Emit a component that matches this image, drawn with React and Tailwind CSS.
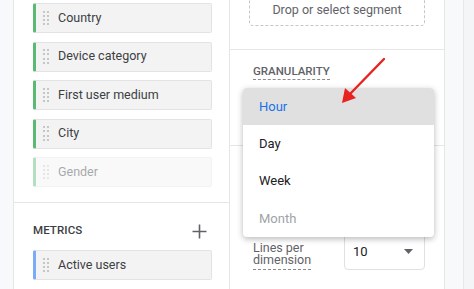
const dims = [
  { name: "Country" },
  { name: "Device category" },
  { name: "First user medium" },
  { name: "City" },
  { name: "Gender", faded: true },
];

const granularity = [
  { label: "Hour", active: true },
  { label: "Day" },
  { label: "Week" },
  { label: "Month", disabled: true },
];

const Handle = () => (
  <div className="grid grid-cols-2 gap-x-[2px] gap-y-[2.3px] w-[6px]">
    {Array.from({ length: 8 }).map((_, i) => (
      <span key={i} className="w-[2px] h-[2px] bg-[#c4c7c5]" />
    ))}
  </div>
);

const Chip = ({ name, color, faded }) => (
  <div
    className={`h-[30px] flex items-center bg-[#f3f3f3] border border-[#e3e3e3] border-l-[3px] rounded-[2px] pl-[7px] ${color} ${
      faded ? "opacity-45" : ""
    }`}
  >
    <Handle />
    <span className="ml-[9px] text-[12.5px] text-[#3c4043]">{name}</span>
  </div>
);

const App = () => {
  return (
    <div
      className="relative w-[474px] h-[289px] overflow-hidden flex bg-[#f8f9fa]"
      style={{ fontFamily: "Roboto, 'Liberation Sans', sans-serif" }}
    >
      {/* left gutter */}
      <div className="w-[13px] shrink-0" />

      {/* dimensions / metrics column */}
      <div className="w-[217px] shrink-0 bg-white border-l border-r border-[#e6e6e6] flex flex-col">
        <div className="pt-[3px] pl-[19px] pr-[17px] pb-[15px] flex flex-col gap-[8.5px]">
          {dims.map((d) => (
            <Chip key={d.name} name={d.name} faded={d.faded} color="border-l-[#5bb974]" />
          ))}
        </div>
        <div className="border-t border-[#e6e6e6] pt-[21px] pl-[19px] pr-[17px]">
          <div className="h-[14px] flex items-center justify-between">
            <span className="text-[11.5px] font-medium text-[#3c4043] tracking-[0.1px]">METRICS</span>
            <svg width="15" height="15" viewBox="0 0 15 15" className="mr-[5px]">
              <path d="M7.5 0.5v14M0.5 7.5h14" stroke="#5f6368" strokeWidth="1.6" />
            </svg>
          </div>
          <div className="mt-[12px]">
            <Chip name="Active users" color="border-l-[#7baaf7]" />
          </div>
        </div>
      </div>

      {/* settings column */}
      <div className="w-[215px] shrink-0 bg-white border-r border-[#e6e6e6] flex flex-col">
        <div className="px-[19px] pb-[23px]">
          <div className="mt-[-20px] h-[46px] border border-dashed border-[#c6c6c6] rounded-[4px] flex items-end justify-center pb-[5px]">
            <span className="text-[12.5px] text-[#5f6368]">Drop or select segment</span>
          </div>
        </div>
        <div className="border-t border-[#e6e6e6] h-[96px] pt-[14px] pl-[23px] flex items-start">
          <span className="text-[11.5px] font-medium text-[#5f6368] leading-[14px] pb-[1px] border-b border-dashed border-[#8a8a8a]">
            GRANULARITY
          </span>
        </div>
        <div className="border-t border-[#e6e6e6] flex items-end pl-[23px] pr-[19px] pt-[86px]">
          <div className="flex flex-col text-[12.5px] leading-[12px] text-[#5f6368] pb-[3px] border-b border-dashed border-[#8a8a8a]">
            <span className="h-[12px]">Lines per</span>
            <span className="h-[12px]">dimension</span>
          </div>
          <div className="ml-auto w-[81px] h-[38px] border border-[#e0e0e0] rounded-[4px] flex items-center justify-between pl-[8px] pr-[11px] pt-[1px]">
            <span className="text-[13px] text-[#202124]">10</span>
            <svg width="9" height="5" viewBox="0 0 9 5">
              <path d="M0 0h9L4.5 5z" fill="#5f6368" />
            </svg>
          </div>
        </div>
      </div>

      {/* right gutter */}
      <div className="w-[19px] shrink-0 border-r border-[#e8e8e8]" />
      <div className="flex-1 bg-[#f4f5f6]" />

      {/* granularity dropdown */}
      <div className="absolute left-[243px] top-[88px] w-[191px] bg-white rounded-[4px] shadow-[0_2px_6px_rgba(0,0,0,0.28)] overflow-hidden">
        {granularity.map((g) => (
          <div
            key={g.label}
            className={`h-[37.3px] flex items-center pl-[16px] text-[13px] ${
              g.active
                ? "bg-[#e0e0e0] text-[#1a73e8]"
                : g.disabled
                ? "text-[#a0a4a8]"
                : "text-[#202124]"
            }`}
          >
            {g.label}
          </div>
        ))}
      </div>

      {/* annotation arrow */}
      <svg className="absolute left-0 top-0 pointer-events-none" width="474" height="289">
        <line x1="384" y1="59" x2="349" y2="95" stroke="#e8221f" strokeWidth="2.4" strokeLinecap="round" />
        <path d="M342 103 L345 88 L356 98 Z" fill="#e8221f" />
      </svg>
    </div>
  );
};

export default App;
